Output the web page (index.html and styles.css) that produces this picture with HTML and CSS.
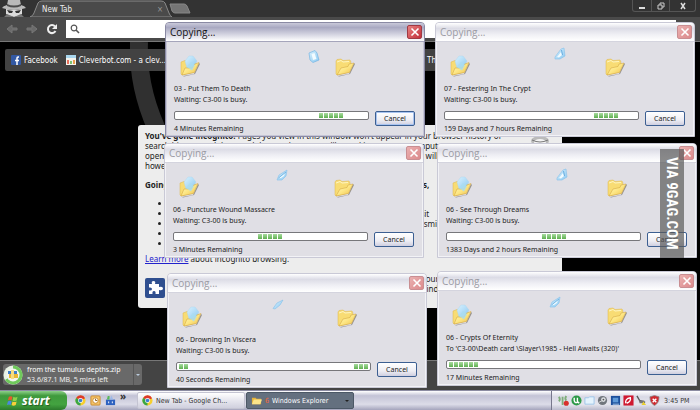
FILE: index.html
```html
<!DOCTYPE html>
<html lang="en">
<head>
    <meta charset="UTF-8">
    <meta name="viewport" content="width=device-width, initial-scale=1.0">
    <title>New Tab</title>
    <link rel="stylesheet" href="styles.css">
</head>
<body>
    <svg class="defs" width="0" height="0" aria-hidden="true">
        <defs>
            <linearGradient id="gold" x1="0" y1="0" x2="1" y2="1">
                <stop offset="0" stop-color="#fff9c4"/>
                <stop offset="0.5" stop-color="#fde683"/>
                <stop offset="1" stop-color="#edbd48"/>
            </linearGradient>
            <linearGradient id="sheet" x1="0" y1="0" x2="1" y2="1">
                <stop offset="0" stop-color="#d9f1fd"/>
                <stop offset="1" stop-color="#8cc9f2"/>
            </linearGradient>
        </defs>
        <symbol id="folder" viewBox="0 0 20 22">
            <path d="M3 21 L14 19 L19 8 L20 9 L15 19 L4 21.500Z" fill="#77736c" opacity="0.7"/>
            <path d="M1 6 L2 4.500 L6 4 L8 5.500 L15 5 L16 7 L14 17 L2 20 L1 19Z" fill="#f8dc74" stroke="#dcb44c" stroke-width="0.5"/>
            <path d="M2 20 L6 13 L13 11.500 L14 9 L19 8 L14.500 17.500Z" fill="url(#gold)" stroke="#cfa03a" stroke-width="0.5"/>
            <path d="M2 7 L6 5.500 L8 7 L14 6.500" fill="none" stroke="#fffbd8" stroke-width="0.8"/>
        </symbol>
        <symbol id="folder-full" viewBox="0 0 20 22">
            <path d="M3 21 L14 19 L19 8 L20 9 L15 19 L4 21.500Z" fill="#77736c" opacity="0.7"/>
            <path d="M1 7 L5 5.500 L16 7 L14 17 L2 20 L1 19Z" fill="#f8dc74" stroke="#dcb44c" stroke-width="0.5"/>
            <path d="M5 6 L9 1 L13 1 L17 6 L14 11 L7 13Z" fill="url(#sheet)" stroke="#a8d4ee" stroke-width="0.4"/>
            <path d="M2 20 L5 13 L12 13 L14 9.500 L19 7.500 L14.500 17.500Z" fill="url(#gold)" stroke="#cfa03a" stroke-width="0.5"/>
            <path d="M7 12 L12 15.500 L15 10 L11 7Z" fill="#a9dcf0" opacity="0.85"/>
        </symbol>
        <symbol id="sheet-flat" viewBox="0 0 12 13">
            <path d="M1 3 L7 0.500 L9 3 L11 10 L5 12.500 L2 10Z" fill="url(#sheet)" stroke="#68aee0" stroke-width="0.6"/>
            <path d="M3.500 4 L6.500 3 L8.500 9 L5 10Z" fill="#f2fbff"/>
        </symbol>
        <symbol id="sheet-turn" viewBox="0 0 12 13">
            <path d="M1 10 L7 2 L10 1 L11 9 L6 12 L1 12Z" fill="url(#sheet)" stroke="#84c0ea" stroke-width="0.6"/>
            <path d="M3 10 L7 5 L8 8 L5 10.500Z" fill="#f2fbff"/>
            <path d="M7.500 3 L8.500 8" stroke="#4c98d4" stroke-width="0.7"/>
        </symbol>
        <symbol id="sheet-lean" viewBox="0 0 12 13">
            <path d="M1 11 L3 6 L11 1 L10 7 L6 11Z" fill="url(#sheet)" stroke="#84c0ea" stroke-width="0.6"/>
            <path d="M3 9 L9 4 L8 7 L5 9Z" fill="#eefaff"/>
            <path d="M2.500 9 L10 3" stroke="#4c98d4" stroke-width="0.6"/>
        </symbol>
        <symbol id="sheet-edge" viewBox="0 0 12 13">
            <path d="M1 10.500 L5 5 L11 2 L8 7 L3 11Z" fill="url(#sheet)" stroke="#84c0ea" stroke-width="0.6"/>
        </symbol>
        <symbol id="cross" viewBox="0 0 10 10">
            <path d="M1.500 1.500 L8.500 8.500 M8.500 1.500 L1.500 8.500" stroke="#fff" stroke-width="1.600"/>
        </symbol>
        <symbol id="chrome" viewBox="0 0 12 12">
            <circle cx="6" cy="6" r="5.500" fill="#f6cf2e"/>
            <path d="M6 6 L1.200 3.200 A5.500 5.500 0 0 1 11 3.500Z" fill="#dd3a2c"/>
            <path d="M6 6 L1.200 3.200 A5.500 5.500 0 0 0 6 11.500Z" fill="#3aa644"/>
            <circle cx="6" cy="6" r="2.700" fill="#fff"/>
            <circle cx="6" cy="6" r="2" fill="#3f7fd0"/>
        </symbol>
    </svg>

    <main class="desktop">
        <section class="browser">
            <header class="tabstrip">
                <svg class="spy" viewBox="0 0 24 17">
                    <path d="M6 0 H18 L19 5 Q23 6 24 8 Q12 12 0 8 Q1 6 5 5Z" fill="#b9b9b9"/>
                    <path d="M5 4 Q12 7 19 4 V6 Q12 9 5 6Z" fill="#4c4c4c"/>
                    <path d="M4 9 Q12 11 20 9 V14 Q16 17 12 17 Q8 17 4 14Z" fill="#dcdcdc"/>
                    <path d="M5 10 L11 11 L10 13 H7Z M19 10 L13 11 L14 13 H17Z" fill="#333"/>
                    <path d="M2 17 L5 14 L12 17 L19 14 L22 17Z" fill="#777"/>
                </svg>
                <div class="tab">
                    <svg class="tab-shape" viewBox="0 0 142 17" preserveAspectRatio="none">
                        <path d="M0 17 Q3 16 4 13 L8 3 Q9 1 12 1 H131 Q134 1 135 3 L139 13 Q140 16 142 17Z" fill="#4a4a4a" stroke="#8a8a8a"/>
                    </svg>
                    <span class="tab-name">New Tab</span>
                    <span class="tab-close">×</span>
                </div>
                <svg class="new-tab" viewBox="0 0 22 11">
                    <path d="M1 1 H15 Q17 1 18 3 L21 10 H6 Q4 10 3 8Z" fill="#757575" stroke="#888"/>
                </svg>
                <div class="caption">
                    <button aria-label="Minimize"><svg viewBox="0 0 8 8"><path d="M1 6 H7" stroke="#ddd" stroke-width="2"/></svg></button>
                    <button aria-label="Restore"><svg viewBox="0 0 8 8"><path d="M1 3 H5 V7 H1Z M3 3 V1 H7 V5 H5" fill="none" stroke="#ccc"/></svg></button>
                    <button aria-label="Close"><svg viewBox="0 0 8 8"><path d="M2 1 L6 7 M6 1 L2 7" stroke="#ddd" stroke-width="1.500"/></svg></button>
                </div>
            </header>

            <div class="toolbar">
                <svg class="nav" viewBox="0 0 12 12"><path d="M1 6 L6 2 V5 H11 V7 H6 V10Z" fill="#6a6a6a" stroke="#777"/></svg>
                <svg class="nav" viewBox="0 0 12 12"><path d="M11 6 L6 2 V5 H1 V7 H6 V10Z" fill="#6a6a6a" stroke="#777"/></svg>
                <svg class="nav" viewBox="0 0 12 12"><path d="M9.500 8 A4 4 0 1 1 9 3.500" fill="none" stroke="#eee" stroke-width="2"/><path d="M11 1 V6 H6Z" fill="#eee"/></svg>
                <label class="omnibox">
                    <svg viewBox="0 0 10 10"><circle cx="4" cy="4" r="2.800" fill="none" stroke="#555" stroke-width="1.200"/><path d="M6 6 L9 9" stroke="#555" stroke-width="1.600"/></svg>
                    <input type="text" aria-label="Address">
                </label>
            </div>

            <div class="page">
                <svg class="ring" viewBox="0 0 40 100">
                    <path d="M9 0 Q7 50 33 100" fill="none" stroke="#303030" stroke-width="18"/>
                </svg>
                <nav class="bookmarks">
                    <a href="#"><svg viewBox="0 0 10 10"><rect width="10" height="10" rx="1" fill="#3359a4"/><path d="M8 2 H7 Q6 2 6 3 V10 M4 5.500 H8" fill="none" stroke="#fff" stroke-width="1.500"/></svg>Facebook</a>
                    <a href="#"><svg viewBox="0 0 10 10"><rect width="10" height="10" fill="#f4f4ee"/><rect width="10" height="3" fill="#a8d6ee"/><path d="M2 5 V9" stroke="#e8705c" stroke-width="2"/><path d="M5 6 V9" stroke="#7fc474" stroke-width="2"/><path d="M8 5 V9" stroke="#e9a04e" stroke-width="2"/></svg>Cleverbot.com - a clev...</a>
                    <a href="#" class="far">The Pirate Bay</a>
                </nav>
                <article class="notice">
                    <svg class="agent" viewBox="0 0 24 24">
                        <ellipse cx="12" cy="16" rx="9" ry="5" fill="#bbb"/>
                        <ellipse cx="12" cy="17" rx="6" ry="3" fill="#f4f4f4"/>
                        <path d="M4 15 Q12 19 20 15" fill="none" stroke="#777"/>
                    </svg>
                    <p><b>You've gone incognito.</b> Pages you view in this window won't appear in your browser history or<br>search history, and they won't leave other traces, like cookies, on your computer<br>open incognito windows. Any files you download or bookmarks you create will be<br>however.</p>
                    <p><b>Going incognito doesn't affect the behavior of all other people, servers,</b></p>
                    <ul>
                        <li>Websites that collect or share information about you</li>
                        <li>Internet service providers or employers that track the pages you visit</li>
                        <li>Malicious software that tracks your keystrokes in exchange for free smileys</li>
                        <li>Surveillance by secret agents</li>
                        <li>People standing behind you</li>
                    </ul>
                    <p><a href="#">Learn more</a> about incognito browsing.</p>
                    <div class="extensions">
                        <svg viewBox="0 0 20 20">
                            <rect width="20" height="20" rx="2" fill="#2f4f8f"/>
                            <path d="M4 6 H7 Q6 3 8.500 3 Q11 3 10 6 H14 V9 Q18 8 18 10.500 Q18 13 14 12 V16 H10.500 Q11 13 9 13 Q7 13 7.500 16 H4 V12.500 Q7 13 7 11 Q7 9 4 9.500Z" fill="#fff"/>
                        </svg>
                        <p>Because Google Chrome does not control how extensions handle your<br>personal data, so all extensions have been disabled for incognito wind</p>
                    </div>
                </article>
            </div>

            <footer class="shelf">
                <div class="download">
                    <svg class="ring-icon" viewBox="0 0 20 20">
                        <circle cx="10" cy="10" r="9.500" fill="#e8f2e4"/>
                        <path d="M10 10 V0.500 A9.500 9.500 0 1 1 2 15Z" fill="#6fc95c"/>
                        <circle cx="10" cy="10" r="6.500" fill="#f2f5ef"/>
                        <rect x="5" y="6" width="9" height="3" fill="#3f7fc8"/>
                        <rect x="6" y="9" width="9" height="4" fill="#e8b735"/>
                        <rect x="8" y="5" width="3" height="9" fill="#f6dc80"/>
                    </svg>
                    <div class="download-text">
                        <b>from the tumulus depths.zip</b>
                        <span>53.6/87.1 MB, 5 mins left</span>
                    </div>
                    <button class="download-menu" aria-label="Options"></button>
                </div>
            </footer>
        </section>

        <section class="dialog active" id="d1">
            <header><h2>Copying...</h2><button class="close" aria-label="Close"><svg><use href="#cross"/></svg></button></header>
            <div class="dialog-body">
                <div class="flight"><svg><use href="#folder-full"/></svg><svg class="sheet"><use href="#sheet-flat"/></svg><svg><use href="#folder"/></svg></div>
                <p>03 - Put Them To Death<br>Waiting: C3-00 is busy.</p>
                <div class="status">
                    <div class="bar" role="progressbar"><i></i><i></i><i></i><i></i><i></i></div>
                    <button class="cancel">Cancel</button>
                </div>
                <p class="left">4 Minutes Remaining</p>
            </div>
        </section>

        <section class="dialog" id="d2">
            <header><h2>Copying...</h2><button class="close" aria-label="Close"><svg><use href="#cross"/></svg></button></header>
            <div class="dialog-body">
                <div class="flight"><svg><use href="#folder-full"/></svg><svg class="sheet"><use href="#sheet-turn"/></svg><svg><use href="#folder"/></svg></div>
                <p>07 - Festering In The Crypt<br>Waiting: C3-00 is busy.</p>
                <div class="status">
                    <div class="bar" role="progressbar"><i></i><i></i><i></i><i></i><i></i></div>
                    <button class="cancel">Cancel</button>
                </div>
                <p class="left">159 Days and 7 hours Remaining</p>
            </div>
        </section>

        <section class="dialog" id="d3">
            <header><h2>Copying...</h2><button class="close" aria-label="Close"><svg><use href="#cross"/></svg></button></header>
            <div class="dialog-body">
                <div class="flight"><svg><use href="#folder-full"/></svg><svg class="sheet"><use href="#sheet-lean"/></svg><svg><use href="#folder"/></svg></div>
                <p>06 - Puncture Wound Massacre<br>Waiting: C3-00 is busy.</p>
                <div class="status">
                    <div class="bar" role="progressbar"><i></i><i></i><i></i><i></i><i></i></div>
                    <button class="cancel">Cancel</button>
                </div>
                <p class="left">3 Minutes Remaining</p>
            </div>
        </section>

        <section class="dialog" id="d4">
            <header><h2>Copying...</h2><button class="close" aria-label="Close"><svg><use href="#cross"/></svg></button></header>
            <div class="dialog-body">
                <div class="flight"><svg><use href="#folder-full"/></svg><svg class="sheet"><use href="#sheet-turn"/></svg><svg><use href="#folder"/></svg></div>
                <p>06 - See Through Dreams<br>Waiting: C3-00 is busy.</p>
                <div class="status">
                    <div class="bar" role="progressbar"><i></i><i></i><i></i><i></i><i></i></div>
                    <button class="cancel">Cancel</button>
                </div>
                <p class="left">1383 Days and 2 hours Remaining</p>
            </div>
        </section>

        <section class="dialog" id="d5">
            <header><h2>Copying...</h2><button class="close" aria-label="Close"><svg><use href="#cross"/></svg></button></header>
            <div class="dialog-body">
                <div class="flight"><svg><use href="#folder-full"/></svg><svg class="sheet"><use href="#sheet-edge"/></svg><svg><use href="#folder"/></svg></div>
                <p>06 - Drowning In Viscera<br>Waiting: C3-00 is busy.</p>
                <div class="status">
                    <div class="bar" role="progressbar"><i></i><i></i><i class="wrap"></i><i></i><i></i></div>
                    <button class="cancel">Cancel</button>
                </div>
                <p class="left">40 Seconds Remaining</p>
            </div>
        </section>

        <section class="dialog" id="d6">
            <header><h2>Copying...</h2><button class="close" aria-label="Close"><svg><use href="#cross"/></svg></button></header>
            <div class="dialog-body">
                <div class="flight"><svg><use href="#folder-full"/></svg><svg class="sheet"><use href="#sheet-lean"/></svg><svg><use href="#folder"/></svg></div>
                <p>06 - Crypts Of Eternity<br>To 'C3-00\Death card \Slayer\1985 - Hell Awaits (320)'</p>
                <div class="status">
                    <div class="bar" role="progressbar"><i></i><i></i><i></i><i></i><i></i><i></i></div>
                    <button class="cancel">Cancel</button>
                </div>
                <p class="left">17 Minutes Remaining</p>
            </div>
        </section>

        <div class="watermark">VIA 9GAG.COM</div>
    </main>

    <footer class="taskbar">
        <button class="start">
            <svg viewBox="0 0 12 12">
                <path d="M2 2 Q4 0.500 6 2 L5 6 Q3 4.500 1 6Z" fill="#e8592c"/>
                <path d="M7 2 Q9 3.500 11.500 2 L10.500 6 Q8 7.500 6 6Z" fill="#8fd14a"/>
                <path d="M1 7 Q3 5.500 5 7 L4 11 Q2 9.500 0 11Z" fill="#4a86e0"/>
                <path d="M6 7 Q8 8.500 10.500 7 L9.500 11 Q7 12.500 5 11Z" fill="#f7cf3a"/>
            </svg>
            start
        </button>
        <div class="quick">
            <svg viewBox="0 0 12 12"><use href="#chrome"/></svg>
            <svg viewBox="0 0 12 12"><rect x="1" y="1" width="10" height="10" rx="1" fill="#f3c268" stroke="#c98a2c"/><circle cx="6" cy="6" r="3" fill="#fff" stroke="#c98a2c"/><path d="M6 4 V6 H8" fill="none" stroke="#8a5a14"/></svg>
            <svg viewBox="0 0 12 12"><path d="M1 5 H11 V11 H1Z" fill="#2e62c0"/><path d="M2 5 L3 1 H5 V5Z" fill="#58b85a"/><path d="M5 5 L7 0.500 L9 5Z" fill="#9cb8e8"/><path d="M4 7 V9 M8 7 V9" stroke="#fff"/></svg>
            <b>»</b>
        </div>
        <button class="task"><svg viewBox="0 0 12 12"><use href="#chrome"/></svg>New Tab - Google Ch...</button>
        <button class="task pressed"><svg viewBox="0 0 12 12"><path d="M1 3 H5 L6 4 H11 V10 H1Z" fill="#e5b43c"/><path d="M1 10 L3 5 H12 L10 10Z" fill="#fbe48a"/></svg><em>6</em> Windows Explorer<span class="arrow"></span></button>
        <div class="tray">
            <svg viewBox="0 0 12 12"><path d="M1 2 Q3 5 1 7 M9 1 Q7 4 9 6 M5 2 V11" fill="none" stroke="#7fae7a" stroke-width="2"/><circle cx="9" cy="9" r="2.800" fill="#d8302c"/></svg>
            <svg viewBox="0 0 12 12"><circle cx="6" cy="6" r="5.500" fill="#2d9a48"/><path d="M3.500 3 V6 Q4 9 7 8 V3 M7 7 L9 9" fill="none" stroke="#fff" stroke-width="1.500"/></svg>
            <svg viewBox="0 0 12 12"><path d="M1 3 H5 L6 2 H11 V10 H1Z" fill="#e4f3fd" stroke="#9cc4e8"/></svg>
            <svg viewBox="0 0 12 12"><circle cx="6" cy="6" r="5" fill="#70757c"/><circle cx="7" cy="5" r="2.500" fill="#dde0e4"/><circle cx="7" cy="5" r="1" fill="#555"/><path d="M2 8 L6 6" stroke="#ddd"/></svg>
            <svg viewBox="0 0 12 12"><rect x="1" y="1" width="10" height="10" fill="#1d4f9c"/><path d="M3 3 H9 V8 H3Z" fill="#5f9ad8"/><path d="M3 10 H10" stroke="#b7d2ee"/></svg>
            <svg viewBox="0 0 12 12"><rect x="0.500" y="0.500" width="11" height="11" fill="#cf1830"/><path d="M3 9 Q2 4 8 3 Q9 7 4 9" fill="none" stroke="#fff" stroke-width="1.500"/></svg>
            <svg viewBox="0 0 12 12"><path d="M1 1 L4 6 L10 8" fill="none" stroke="#555" stroke-width="1.500"/><path d="M3 6 H9 V9 H4Z" fill="#777"/><path d="M6 11 L8 7 L11 11Z" fill="#e9cf2c"/></svg>
            <svg viewBox="0 0 12 12"><path d="M6 0.500 L11 2 Q11 9 6 11.500 Q1 9 1 2Z" fill="#cf2a30" stroke="#888" stroke-width="0.800"/><path d="M4 4 L8 8 M8 4 L4 8" stroke="#fff" stroke-width="1.500"/></svg>
            <time>3:45 PM</time>
        </div>
    </footer>
</body>
</html>
```
FILE: styles.css
```css
* {
    box-sizing: border-box;
}
body {
    margin: 0;
    min-height: 100vh;
    display: flex;
    flex-direction: column;
    overflow: hidden;
    background: #000;
    font-family: "Noto Sans", "Open Sans", sans-serif;
    font-size: 7px;
}
button {
    margin: 0;
    padding: 0;
    border: 0;
    background: none;
    font: inherit;
    color: inherit;
}
svg {
    display: block;
    flex: none;
}
h2, p, ul {
    margin: 0;
}
.defs {
    position: absolute;
}
.desktop {
    position: relative;
    flex: 1;
    display: flex;
}

/* browser */
.browser {
    flex: 1;
    display: flex;
    flex-direction: column;
}
.tabstrip {
    display: flex;
    height: 17px;
    background: #333;
}
.spy {
    width: 24px;
    height: 17px;
    margin-left: 2px;
}
.tab {
    position: relative;
    display: flex;
    align-items: center;
    justify-content: space-between;
    width: 142px;
    margin-left: 4px;
    padding: 1px 9px 0 12px;
    color: #eee;
    font-size: 8px;
    font-family: "DejaVu Sans Condensed", "Noto Sans", sans-serif;
}
.tab-shape {
    position: absolute;
    left: 0;
    top: 0;
    width: 100%;
    height: 17px;
}
.tab-name, .tab-close {
    position: relative;
}
.tab-close {
    color: #999;
}
.new-tab {
    width: 22px;
    height: 11px;
    margin-top: 3px;
    margin-left: -3px;
}
.caption {
    display: flex;
    height: 12px;
    margin: 0 4px 0 auto;
    border: 1px solid #555;
    border-top: 0;
    border-radius: 0 0 3px 3px;
}
.caption button {
    display: flex;
    align-items: center;
    justify-content: center;
    width: 18px;
}
.caption button + button {
    border-left: 1px solid #555;
}
.caption button:last-child {
    width: 26px;
}
.caption svg {
    width: 8px;
    height: 8px;
}
.toolbar {
    display: flex;
    align-items: center;
    gap: 8px;
    height: 25px;
    padding: 0 24px 0 6px;
    background: #4a4a4a;
    border-bottom: 1px solid #777;
}
.nav {
    width: 12px;
    height: 12px;
}
.omnibox {
    display: flex;
    align-items: center;
    flex: 1;
    height: 18px;
    padding-left: 4px;
    background: #fff;
}
.omnibox svg {
    width: 10px;
    height: 10px;
}
.omnibox input {
    flex: 1;
    border: 0;
    outline: 0;
    background: none;
}
.page {
    position: relative;
    flex: 1;
    padding: 7px 5px;
    background: #000;
}
.ring {
    position: absolute;
    left: 130px;
    top: 0;
    width: 40px;
    height: 100px;
}
.bookmarks {
    position: relative;
    display: flex;
    align-items: center;
    gap: 8px;
    height: 22px;
    padding-left: 6px;
    border-radius: 2px;
    background: #424242;
}
.bookmarks a {
    display: flex;
    align-items: center;
    gap: 3px;
    color: #fff;
    font-size: 8px;
    font-family: "DejaVu Sans Condensed", "Noto Sans", sans-serif;
    text-decoration: none;
}
.bookmarks svg {
    width: 10px;
    height: 10px;
}
.bookmarks .far {
    width: 268px;
    margin-left: auto;
}
.notice {
    position: relative;
    width: 424px;
    height: 183px;
    margin: 54px auto 0;
    padding: 6px 7px;
    border-radius: 3px;
    background: #ededed;
    color: #222;
    font-size: 8px;
    line-height: 10px;
    white-space: nowrap;
}
.notice a {
    color: #22c;
}
.notice p + p, .notice ul {
    margin-top: 9px;
}
.notice ul {
    padding-left: 26px;
}
.notice ul + p {
    margin-top: 5px;
}
.agent {
    position: absolute;
    right: 10px;
    top: 0;
    width: 24px;
    height: 24px;
}
.extensions {
    display: flex;
    gap: 10px;
    margin-top: 10px;
}
.extensions svg {
    width: 20px;
    height: 20px;
    margin-top: 4px;
}
.shelf {
    height: 30px;
    padding: 3px;
    border-top: 1px solid #777;
    background: #444;
}
.download {
    display: flex;
    align-items: center;
    gap: 4px;
    width: 139px;
    height: 21px;
    border-radius: 3px;
    background: #696969;
    color: #eee;
}
.ring-icon {
    width: 20px;
    height: 20px;
}
.download-text {
    flex: 1;
    display: flex;
    flex-direction: column;
    line-height: 10px;
    white-space: nowrap;
}
.download-text b {
    font-weight: 400;
    color: #fff;
}
.download-menu {
    align-self: stretch;
    display: flex;
    align-items: center;
    justify-content: center;
    width: 9px;
    border-left: 1px solid #555;
}
.download-menu::before, .arrow::before {
    content: "";
    display: block;
    border: 2px solid transparent;
    border-top-color: #bcd;
    border-bottom: 0;
}

/* copy dialogs */
.dialog {
    position: absolute;
    width: 260px;
    height: 115px;
    border: 1px solid #c9c9d6;
    border-radius: 4px 4px 0 0;
    background: #e0dfe5;
    color: #222;
    box-shadow: inset 0 0 0 1px #f2f2f6;
}
.dialog header {
    display: flex;
    align-items: center;
    justify-content: space-between;
    height: 19px;
    padding: 0 2px 0 4px;
    border-radius: 3px 3px 0 0;
    border-bottom: 1px solid #d4d4de;
    background: linear-gradient(#fff, #dcdce6 30%, #f0f0f5 65%, #fff);
}
.dialog h2 {
    color: #9b9ba3;
    font-family: "Open Sans", sans-serif;
    font-size: 10px;
    font-weight: 400;
}
.dialog.active {
    border-color: #8a8aa4;
    box-shadow: inset 0 0 0 1px #c4c4d4;
}
.dialog.active header {
    border-bottom-color: #a5a5bb;
    background: linear-gradient(#c9c9da, #a9a9c2 25%, #d0d0de 60%, #fff);
}
.dialog.active h2 {
    color: #111;
}
.close {
    display: flex;
    align-items: center;
    justify-content: center;
    width: 15px;
    height: 14px;
    border: 1px solid #c98e92;
    border-radius: 2px;
    background: linear-gradient(135deg, #eab0b0, #dc8a8c);
}
.close svg {
    width: 10px;
    height: 10px;
}
.active .close {
    border-color: #a03a44;
    background: linear-gradient(135deg, #e88080, #c22f3a);
}
.dialog-body {
    padding: 0 9px 0 8px;
    line-height: 11px;
    white-space: nowrap;
}
.flight {
    position: relative;
    display: flex;
    gap: 135px;
    padding: 13px 0 6px 6px;
}
.flight svg {
    width: 20px;
    height: 22px;
}
.flight .sheet {
    position: absolute;
    width: 12px;
    height: 13px;
}
.status {
    display: flex;
    align-items: flex-start;
    justify-content: space-between;
    height: 12px;
    margin-top: 6px;
}
.bar {
    display: flex;
    gap: 1px;
    width: 195px;
    height: 9px;
    padding: 1px 2px;
    border: 1px solid #77777b;
    border-radius: 2px;
    background: #fff;
}
.bar i {
    width: 4px;
    height: 5px;
    background: linear-gradient(#a9dca0, #5fb050);
}
.bar .wrap {
    margin-left: auto;
}
.cancel {
    width: 40px;
    height: 15px;
    border: 1px solid #3c5f92;
    border-radius: 2px;
    background: linear-gradient(#fff, #eeeef4 60%, #cfcfe0);
}
.active .cancel {
    box-shadow: inset 0 0 0 1px #a9c4f0;
}

#d1 { left: 165px; top: 22px; }
#d2 { left: 435px; top: 22px; }
#d3 { left: 164px; top: 143px; }
#d4 { left: 437px; top: 143px; }
#d5 { left: 167px; top: 273px; }
#d6 { left: 437px; top: 271px; }
#d1 .sheet { left: 134px; top: 8px; }
#d2 .sheet { left: 110px; top: 5px; }
#d3 .sheet { left: 103px; top: 6px; }
#d4 .sheet { left: 110px; top: 5px; }
#d5 .sheet { left: 96px; top: 5px; }
#d6 .sheet { left: 103px; top: 5px; }
#d1 .bar { padding-left: 144px; }
#d2 .bar { padding-left: 149px; }
#d3 .bar { padding-left: 84px; }
#d4 .bar { padding-left: 95px; }

.watermark {
    position: absolute;
    left: 660px;
    top: 149px;
    width: 24px;
    height: 109px;
    display: flex;
    align-items: center;
    justify-content: center;
    writing-mode: vertical-rl;
    background: rgba(90, 90, 90, 0.7);
    color: #fff;
    font-family: "Liberation Sans Narrow", "Roboto Condensed", Roboto, sans-serif;
    font-size: 15px;
    font-weight: 700;
    white-space: nowrap;
}

/* taskbar */
.taskbar {
    display: flex;
    align-items: stretch;
    height: 20px;
    border-top: 1px solid #8c8ca2;
    background: linear-gradient(#fff, #c3c3d6 25%, #dcdce8 70%, #a4a4bc);
    color: #333;
    white-space: nowrap;
}
.taskbar svg {
    width: 11px;
    height: 11px;
}
.start {
    display: flex;
    align-items: center;
    gap: 4px;
    width: 67px;
    padding-left: 7px;
    border-radius: 0 6px 6px 0;
    background: linear-gradient(#8ed08a, #3f9a3c 25%, #43a340 70%, #2c7a2c);
    color: #fff;
    font-family: "Open Sans", sans-serif;
    font-size: 12px;
    font-style: italic;
    font-weight: 700;
    text-shadow: 1px 1px 1px #245c24;
}
.quick {
    display: flex;
    align-items: center;
    gap: 4px;
    width: 70px;
    padding-left: 8px;
}
.quick b {
    font-size: 10px;
    line-height: 10px;
    align-self: flex-start;
}
.task {
    display: flex;
    align-items: center;
    gap: 3px;
    width: 108px;
    margin: 1px 1px 1px 0;
    padding: 0 4px;
    border: 1px solid #c4c4d2;
    border-radius: 2px;
    background: linear-gradient(#fff, #e6e6ee 50%, #d0d0de);
    font-family: "DejaVu Sans Condensed", "Noto Sans", sans-serif;
}
.task.pressed {
    border-color: #4c5866;
    background: #64707f;
    color: #fff;
}
.task em {
    color: #f0683c;
    font-style: normal;
}
.arrow {
    margin-left: auto;
}
.arrow::before {
    border-top-color: #222;
}
.tray {
    display: flex;
    align-items: center;
    gap: 2px;
    width: 149px;
    margin-left: auto;
    padding-left: 6px;
    border-left: 1px solid #77778c;
    background: linear-gradient(#fff, #d9d9e5 30%, #e6e6ee 70%, #b9b9cb);
}
.tray time {
    margin-left: 2px;
    font-family: "DejaVu Sans Condensed", "Noto Sans", sans-serif;
}
```
